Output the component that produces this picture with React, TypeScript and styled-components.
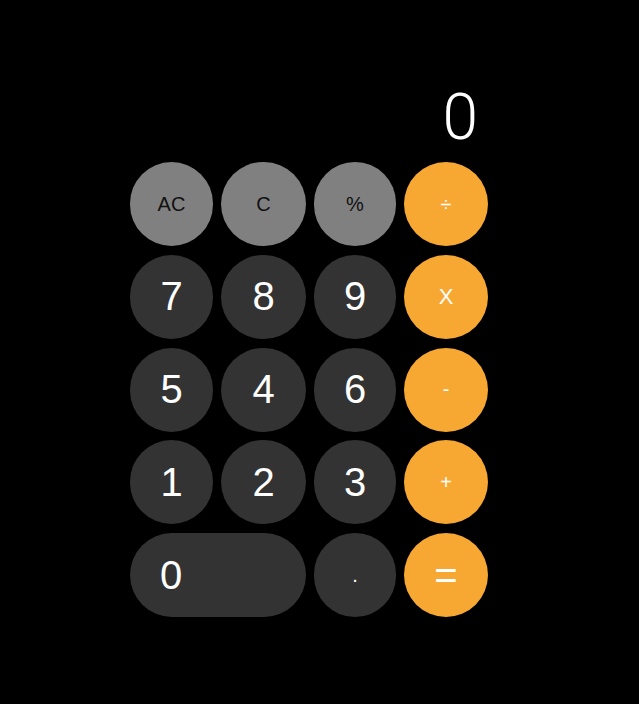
import React from "react";
import styled, { createGlobalStyle } from "styled-components";

const GlobalStyle = createGlobalStyle`
  html, body {
    margin: 0;
    padding: 0;
    background: #000000;
  }
  body {
    font-family: "Liberation Sans", Arial, sans-serif;
  }
`;

const Page = styled.div`
  min-height: 704px;
  background: #000000;
  display: flex;
  justify-content: flex-start;
  padding: 86px 0 0 130px;
  box-sizing: border-box;
`;

const Calculator = styled.div`
  display: flex;
  flex-direction: column;
  width: 358px;
`;

const Display = styled.div`
  color: #ffffff;
  font-family: "Roboto", "Liberation Sans", sans-serif;
  font-weight: 300;
  font-size: 64px;
  line-height: 64px;
  height: 64px;
  text-align: right;
  padding-right: 10px;
  margin-bottom: 12px;
`;

const Keypad = styled.div`
  display: grid;
  grid-template-columns: 83px 85px 82px 84px;
  grid-auto-rows: 84px;
  column-gap: 8px;
  row-gap: 8.75px;
`;

type Variant = "func" | "digit" | "op";

const bg: Record<Variant, string> = {
  func: "#808080",
  digit: "#333333",
  op: "#f7a832",
};

const fg: Record<Variant, string> = {
  func: "#111111",
  digit: "#ffffff",
  op: "#ffffff",
};

const Key = styled.button<{ $variant: Variant; $size: number; $wide?: boolean }>`
  border: none;
  outline: none;
  margin: 0;
  padding: ${(p) => (p.$wide ? "0 0 0 30px" : "0")};
  border-radius: 42px;
  background: ${(p) => bg[p.$variant]};
  color: ${(p) => fg[p.$variant]};
  font-family: "Liberation Sans", Arial, sans-serif;
  font-size: ${(p) => p.$size}px;
  display: flex;
  align-items: center;
  justify-content: ${(p) => (p.$wide ? "flex-start" : "center")};
  grid-column: ${(p) => (p.$wide ? "span 2" : "auto")};
  cursor: pointer;
`;

const keys: { label: string; variant: Variant; size: number; wide?: boolean }[] = [
  { label: "AC", variant: "func", size: 20 },
  { label: "C", variant: "func", size: 20 },
  { label: "%", variant: "func", size: 20 },
  { label: "÷", variant: "op", size: 20 },
  { label: "7", variant: "digit", size: 40 },
  { label: "8", variant: "digit", size: 40 },
  { label: "9", variant: "digit", size: 40 },
  { label: "X", variant: "op", size: 22 },
  { label: "5", variant: "digit", size: 40 },
  { label: "4", variant: "digit", size: 40 },
  { label: "6", variant: "digit", size: 40 },
  { label: "-", variant: "op", size: 20 },
  { label: "1", variant: "digit", size: 40 },
  { label: "2", variant: "digit", size: 40 },
  { label: "3", variant: "digit", size: 40 },
  { label: "+", variant: "op", size: 20 },
  { label: "0", variant: "digit", size: 40, wide: true },
  { label: ".", variant: "digit", size: 20 },
  { label: "=", variant: "op", size: 40 },
];

export default function App() {
  return (
    <>
      <GlobalStyle />
      <Page>
        <Calculator>
          <Display>0</Display>
          <Keypad>
            {keys.map((k, i) => (
              <Key key={i} $variant={k.variant} $size={k.size} $wide={k.wide}>
                {k.label}
              </Key>
            ))}
          </Keypad>
        </Calculator>
      </Page>
    </>
  );
}
